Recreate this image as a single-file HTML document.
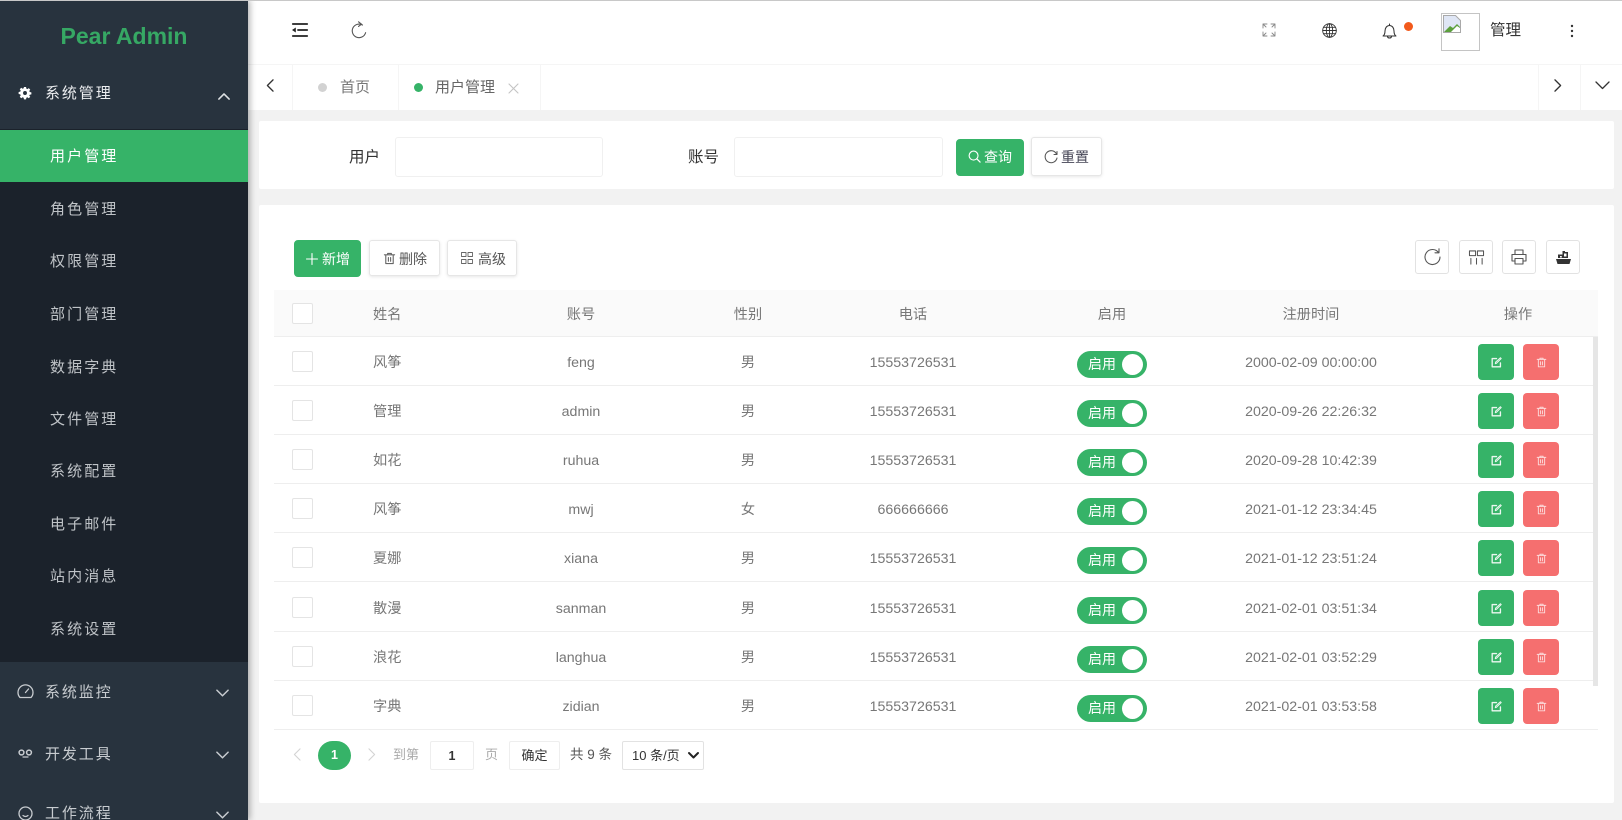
<!DOCTYPE html>
<html lang="zh"><head><meta charset="utf-8"><title>Pear Admin</title>
<style>
*{box-sizing:border-box}
html,body{margin:0;padding:0;width:1622px;height:820px;overflow:hidden;background:#f2f2f2;font-family:"Liberation Sans","Noto Sans CJK SC",sans-serif;color:#666}
#root{position:absolute;left:0;top:0;width:1622px;height:820px;overflow:hidden;filter:blur(.35px)}
.a{position:absolute}
.t{position:absolute;white-space:nowrap;line-height:20px;height:20px}
.c{transform:translateX(-50%)}
#side{left:0;top:0;width:248px;height:820px;background:#28333e;box-shadow:2px 0 6px rgba(0,0,0,.3);overflow:hidden;z-index:5}
.m{left:45px;color:#d8dbde;font-size:15px;letter-spacing:1.9px}
.s{left:50px;color:#bfc3c7;font-size:15px;letter-spacing:2.1px}
#sub{left:0;top:129px;width:248px;height:533px;background:#1b222b}
#act{left:0;top:130px;width:248px;height:52px;background:#36b368}
svg{position:absolute;overflow:visible}
.ln{fill:none;stroke:currentColor;stroke-linecap:round;stroke-linejoin:round}
.card{background:#fff;border-radius:2px}
.btn{position:absolute;background:#fff;border:1px solid #e6e6e6;border-radius:3px;box-shadow:0 1px 3px rgba(0,0,0,.1);font-size:14px;color:#555;line-height:34px;text-align:center;white-space:nowrap}
.g{background:#36b368;border-color:#36b368;color:#fff;box-shadow:none}
.inp{position:absolute;background:#fff;border:1px solid #f0f0f0;border-radius:3px}
.row{position:absolute;left:274px;width:1324px;height:49px;border-bottom:1px solid #eeeeee;font-size:14.2px;color:#777}
.row .t{top:16px}
.head .t{top:15px}
.cb{position:absolute;left:18px;top:14px;width:21px;height:21px;background:#fff;border:1px solid #e4e4e4;border-radius:2px}
.sw{position:absolute;left:803px;top:14px;width:70px;height:27px;border-radius:14px;background:#36b368;color:#fff;font-size:14px;line-height:27px;padding-left:11px}
.sw i{position:absolute;right:4px;top:3px;width:21px;height:21px;border-radius:50%;background:#fff}
.ed,.de{position:absolute;top:7px;width:36px;height:36px;border-radius:4px}
.ed{left:1204px;background:#36b368}.de{left:1249px;background:#f56f6f}
.ed svg,.de svg{left:12.5px;top:12.5px;color:#fff;opacity:.9}
.de svg{opacity:.75}
.sq{position:absolute;top:240px;width:34px;height:34px;background:#fff;border:1px solid #e2e2e2;border-radius:3px;color:#555}
.pg{position:absolute;background:#fff;border:1px solid #eeeeee;top:741px;height:29px;text-align:center;line-height:28px;font-size:13px;color:#333}
</style></head><body>
<svg width="0" height="0" style="position:absolute"><defs>
<symbol id="trash" viewBox="0 0 14 14"><path class="ln" d="M1.500 3h11M5 3V1.500h4V3M3 3v9.500h8V3M5.800 6v4M8.200 6v4" stroke-width="1.200"/></symbol>
<symbol id="edit" viewBox="0 0 14 14"><path class="ln" d="M12 7.500V12.500H1.500V2H7" stroke-width="1.700"/><path class="ln" d="M5.500 8.500l.4-2L12 1l1 1-6 6z" stroke-width="1.300"/></symbol>
<symbol id="down" viewBox="0 0 14 8"><path class="ln" d="M1 1l6 6 6-6" stroke-width="1.600"/></symbol>
</defs></svg>
<div id="root">
<div class="a" style="left:0;top:0;width:1622px;height:1px;background:#c8c8c8;z-index:6"></div>

<!-- sidebar -->
<div class="a" id="side">
<div class="t c" style="left:124px;top:24px;height:24px;line-height:24px;font-size:23px;font-weight:bold;color:#36a864">Pear Admin</div>
<svg style="left:19px;top:87px;color:#fff" width="12" height="12" viewBox="0 0 16 16"><path fill="currentColor" d="M6.600 0h2.800l.4 2.200 1.400.6L13 1.500l2 2-1.300 1.800.6 1.400 2.200.4v2.800l-2.200.4-.6 1.400L15 13l-2 2-1.800-1.300-1.400.6-.4 2.200H6.600l-.4-2.200-1.400-.6L3 15l-2-2 1.300-1.800-.6-1.400L-.5 9.400V6.600l2.200-.4.6-1.400L1 3l2-2 1.800 1.300 1.400-.6z"/><circle cx="8" cy="8" r="2.600" fill="#28333e"/></svg>
<div class="t m" style="top:84px;color:#eceef0">系统管理</div>
<svg style="left:218px;top:93px;color:#dfe2e4" width="12" height="7" viewBox="0 0 14 8"><path class="ln" d="M1 7l6-6 6 6" stroke-width="1.800"/></svg>
<div class="a" id="sub"></div>
<div class="a" id="act"></div>
<div class="t s" style="top:147px;color:#fff">用户管理</div>
<div class="t s" style="top:200px">角色管理</div>
<div class="t s" style="top:252px">权限管理</div>
<div class="t s" style="top:305px">部门管理</div>
<div class="t s" style="top:358px">数据字典</div>
<div class="t s" style="top:410px">文件管理</div>
<div class="t s" style="top:462px">系统配置</div>
<div class="t s" style="top:515px">电子邮件</div>
<div class="t s" style="top:567px">站内消息</div>
<div class="t s" style="top:620px">系统设置</div>
<svg style="left:17px;top:684px;color:#c8ccd0" width="17" height="15" viewBox="0 0 17 15"><path class="ln" d="M3 13.500h11a7.500 7.500 0 1 0-11 0zM8.500 8.500l3-3.500" stroke-width="1.300"/></svg>
<div class="t m" style="top:683px;color:#c8ccd0">系统监控</div>
<svg style="left:216px;top:689px;color:#c8ccd0" width="13" height="8"><use href="#down"/></svg>
<svg style="left:18px;top:749px;color:#c8ccd0" width="15" height="9" viewBox="0 0 15 9"><circle class="ln" cx="3.500" cy="3.500" r="2.400" stroke-width="1.500"/><circle class="ln" cx="11" cy="3.500" r="2.400" stroke-width="1.500"/><path class="ln" d="M5 8h5" stroke-width="1.200"/></svg>
<div class="t m" style="top:745px;color:#c8ccd0">开发工具</div>
<svg style="left:216px;top:751px;color:#c8ccd0" width="13" height="8"><use href="#down"/></svg>
<svg style="left:18px;top:806px;color:#c8ccd0" width="15" height="15" viewBox="0 0 15 15"><circle class="ln" cx="7.500" cy="7.500" r="6.500" stroke-width="1.300"/><path class="ln" d="M5 9.500c1.500 1.200 3.500 1.200 5 0" stroke-width="1.200"/></svg>
<div class="t m" style="top:804px;color:#c8ccd0">工作流程</div>
<svg style="left:216px;top:811px;color:#c8ccd0" width="13" height="8"><use href="#down"/></svg>
</div>

<!-- header -->
<div class="a" style="left:248px;top:0;width:1374px;height:64px;background:#fff"></div>
<svg style="left:292px;top:23px;color:#222" width="16" height="14" viewBox="0 0 16 14"><path class="ln" d="M.8 1h14.400M6 7h9.200M.8 13h14.400" stroke-width="1.800"/><path fill="#222" d="M0 7l3.800-2.500v5z"/></svg>
<svg style="left:351px;top:21px;color:#555" width="16" height="18" viewBox="0 0 16 18"><path class="ln" d="M9.500 3.200A6.800 6.800 0 1 0 14.800 9.500" stroke-width="1.100" transform="rotate(18 8 10)"/><path class="ln" d="M7.500 .8l3 2.400-3 2.200" stroke-width="1.100"/></svg>
<svg style="left:1262px;top:23px;color:#888" width="14" height="14" viewBox="0 0 14 14"><path class="ln" d="M1 5V1h4M1 1l3 3M13 5V1H9M13 1l-3 3M1 9v4h4M1 13l3-3M13 9v4H9M13 13l-3-3" stroke-width=".9"/></svg>
<svg style="left:1322px;top:23px;color:#333" width="15" height="15" viewBox="0 0 15 15"><g class="ln" stroke-width=".9"><circle cx="7.500" cy="7.500" r="6.800"/><ellipse cx="7.500" cy="7.500" rx="3.200" ry="6.800"/><path d="M7.500 .7v13.600M.7 7.500h13.600M1.600 4.300h11.800M1.600 10.700h11.800"/></g></svg>
<svg style="left:1382px;top:23px;color:#333" width="15" height="17" viewBox="0 0 15 17"><path class="ln" d="M1 13h13c-1.500-1-2-2.500-2-5 0-3-1.800-5.500-4.500-5.500S3 5 3 8c0 2.500-.5 4-2 5zM7.500 1v1.500M5.500 13.500c.3 2 3.700 2 4 0" stroke-width="1.050"/></svg>
<div class="a" style="left:1404px;top:22px;width:9px;height:9px;border-radius:50%;background:#f25a1c"></div>
<div class="a" style="left:1441px;top:13px;width:39px;height:38px;border:1px solid #c4c4c4;background:#fff"></div>
<svg style="left:1443px;top:15px" width="18" height="18" viewBox="0 0 18 18"><path d="M.5.5h12l5 5v12H.5z" fill="#dfe6f5" stroke="#a9a9a9"/><path d="M1 17l6-6 3 2 4-4 3 3v5z" fill="#5ca03d"/><path d="M8 17l6-6 3 2v4z" fill="#fff"/></svg>
<div class="t" style="left:1490px;top:21px;font-size:15.500px;color:#333">管理</div>
<svg style="left:1570px;top:24px" width="4" height="14" viewBox="0 0 4 14"><circle cx="2" cy="2" r="1.200" fill="#333"/><circle cx="2" cy="7" r="1.200" fill="#333"/><circle cx="2" cy="12" r="1.200" fill="#333"/></svg>

<!-- tabs -->
<div class="a" style="left:248px;top:64px;width:1374px;height:46px;background:#fff;border-top:1px solid #f5f5f5"></div>
<div class="a" style="left:292px;top:65px;width:1px;height:45px;background:#f5f5f5"></div>
<div class="a" style="left:398px;top:65px;width:1px;height:45px;background:#f5f5f5"></div>
<div class="a" style="left:540px;top:65px;width:1px;height:45px;background:#f5f5f5"></div>
<div class="a" style="left:1538px;top:65px;width:1px;height:45px;background:#f5f5f5"></div>
<div class="a" style="left:1580px;top:65px;width:1px;height:45px;background:#f5f5f5"></div>
<svg style="left:266px;top:79px;color:#333" width="8" height="13" viewBox="0 0 9 15"><path class="ln" d="M8 1L1.500 7.500 8 14" stroke-width="1.500"/></svg>
<div class="a" style="left:318px;top:83px;width:9px;height:9px;border-radius:50%;background:#d2d2d2"></div>
<div class="t" style="left:340px;top:78px;font-size:15px;color:#777">首页</div>
<div class="a" style="left:414px;top:83px;width:9px;height:9px;border-radius:50%;background:#36b368"></div>
<div class="t" style="left:435px;top:78px;font-size:15px;color:#666">用户管理</div>
<svg style="left:508px;top:83px;color:#c4c4c4" width="11" height="11" viewBox="0 0 11 11"><path class="ln" d="M1 1l9 9M10 1l-9 9" stroke-width="1.100"/></svg>
<svg style="left:1554px;top:79px;color:#333" width="8" height="13" viewBox="0 0 9 15"><path class="ln" d="M1 1l6.500 6.500L1 14" stroke-width="1.500"/></svg>
<svg style="left:1595px;top:81px;color:#333" width="15" height="9" viewBox="0 0 15 9"><path class="ln" d="M1 1l6.500 6.500L14 1" stroke-width="1.300"/></svg>

<!-- search card -->
<div class="a card" style="left:259px;top:121px;width:1355px;height:68px"></div>
<div class="t" style="left:349px;top:148px;font-size:15.500px;color:#333">用户</div>
<div class="inp" style="left:395px;top:137px;width:208px;height:40px"></div>
<div class="t" style="left:688px;top:148px;font-size:15.500px;color:#333">账号</div>
<div class="inp" style="left:734px;top:137px;width:209px;height:40px"></div>
<div class="btn g" style="left:956px;top:139px;width:68px;height:37px;border-radius:4px"></div>
<svg style="left:968px;top:150px;color:#fff" width="13" height="13" viewBox="0 0 14 14"><circle class="ln" cx="6" cy="6" r="4.800" stroke-width="1.200"/><path class="ln" d="M9.500 9.500l3.500 3.500" stroke-width="1.400"/></svg>
<div class="t" style="left:984px;top:147px;font-size:14px;color:#fff">查询</div>
<div class="btn" style="left:1031px;top:137px;width:71px;height:39px"></div>
<svg style="left:1044px;top:150px;color:#555" width="14" height="14" viewBox="0 0 14 14"><path class="ln" d="M12.500 4A6 6 0 1 0 13 8M13 1.500V4.500H10" stroke-width="1.050"/></svg>
<div class="t" style="left:1061px;top:147px;font-size:14px;color:#445">重置</div>

<!-- table card -->
<div class="a card" style="left:259px;top:205px;width:1355px;height:598px"></div>
<div class="btn g" style="left:294px;top:240px;width:67px;height:37px;border-radius:4px"></div>
<svg style="left:306px;top:253px;color:#fff" width="12" height="12" viewBox="0 0 12 12"><path class="ln" d="M6 .5v11M.5 6h11" stroke-width="1.100"/></svg>
<div class="t" style="left:322px;top:249px;font-size:14px;color:#fff">新增</div>
<div class="btn" style="left:369px;top:240px;width:71px;height:36px"></div>
<svg style="left:383px;top:252px;color:#666" width="13" height="13"><use href="#trash"/></svg>
<div class="t" style="left:399px;top:249px;font-size:14px;color:#555">删除</div>
<div class="btn" style="left:447px;top:240px;width:70px;height:36px"></div>
<svg style="left:461px;top:252px;color:#666" width="12" height="12" viewBox="0 0 12 12"><g class="ln" stroke-width=".9"><rect x=".5" y=".5" width="4.500" height="4"/><rect x="7" y=".5" width="4.500" height="4"/><rect x=".5" y="7.500" width="4.500" height="4"/><rect x="7" y="7.500" width="4.500" height="4"/></g></svg>
<div class="t" style="left:478px;top:249px;font-size:14px;color:#555">高级</div>

<div class="sq" style="left:1415px"><svg style="left:8px;top:7px" width="17" height="17" viewBox="0 0 17 17"><path class="ln" d="M14.500 4.500A7.500 7.500 0 1 0 16 9M15 .8V4.800H11" stroke-width="1.100"/></svg></div>
<div class="sq" style="left:1459px"><svg style="left:9px;top:9px" width="15" height="15" viewBox="0 0 16 15"><g class="ln" stroke-width="1.100"><rect x=".5" y=".5" width="6.500" height="5"/><rect x="9" y=".5" width="6.500" height="5"/><path d="M2 8.500v6M8 8.500v6M14 8.500v6"/></g></svg></div>
<div class="sq" style="left:1502px"><svg style="left:8px;top:8px" width="16" height="16" viewBox="0 0 16 16"><g class="ln" stroke-width="1.100"><path d="M4 5V1h8v4M4 12H1V5.500h14V12h-3"/><rect x="4" y="9.500" width="8" height="5.500"/></g></svg></div>
<div class="sq" style="left:1546px"><svg style="left:9px;top:8px" width="15" height="16" viewBox="0 0 15 16"><path fill="#333" d="M0 10h15l-1.500 5H1.500zM2 9V5.500h4.500V2H9v1h3v6z"/><path fill="#fff" d="M4 7h1.800v1.500H4zM8 4.500h2.500V7.500H8z"/></svg></div>

<!-- table head -->
<div class="a head" style="left:274px;top:290px;width:1324px;height:47px;background:#fafafa;border-bottom:1px solid #eeeeee;font-size:14.200px;color:#777">
<div class="cb" style="top:13px"></div>
<div class="t" style="left:99px">姓名</div>
<div class="t c" style="left:307px">账号</div>
<div class="t c" style="left:474px">性别</div>
<div class="t c" style="left:639px">电话</div>
<div class="t c" style="left:838px">启用</div>
<div class="t c" style="left:1037px">注册时间</div>
<div class="t c" style="left:1244px">操作</div>
</div>
<div class="a" style="left:1593px;top:337px;width:5px;height:349px;background:#e6e6e6;z-index:2"></div>

<!-- rows -->
<div class="row" style="top:337px"><div class="cb"></div><div class="t" style="left:99px">风筝</div><div class="t c" style="left:307px">feng</div><div class="t c" style="left:474px">男</div><div class="t c" style="left:639px">15553726531</div><div class="sw">启用<i></i></div><div class="t c" style="left:1037px">2000-02-09 00:00:00</div><div class="ed"><svg width="11" height="11"><use href="#edit"/></svg></div><div class="de"><svg width="11" height="11"><use href="#trash"/></svg></div></div>
<div class="row" style="top:386px"><div class="cb"></div><div class="t" style="left:99px">管理</div><div class="t c" style="left:307px">admin</div><div class="t c" style="left:474px">男</div><div class="t c" style="left:639px">15553726531</div><div class="sw">启用<i></i></div><div class="t c" style="left:1037px">2020-09-26 22:26:32</div><div class="ed"><svg width="11" height="11"><use href="#edit"/></svg></div><div class="de"><svg width="11" height="11"><use href="#trash"/></svg></div></div>
<div class="row" style="top:435px"><div class="cb"></div><div class="t" style="left:99px">如花</div><div class="t c" style="left:307px">ruhua</div><div class="t c" style="left:474px">男</div><div class="t c" style="left:639px">15553726531</div><div class="sw">启用<i></i></div><div class="t c" style="left:1037px">2020-09-28 10:42:39</div><div class="ed"><svg width="11" height="11"><use href="#edit"/></svg></div><div class="de"><svg width="11" height="11"><use href="#trash"/></svg></div></div>
<div class="row" style="top:484px"><div class="cb"></div><div class="t" style="left:99px">风筝</div><div class="t c" style="left:307px">mwj</div><div class="t c" style="left:474px">女</div><div class="t c" style="left:639px">666666666</div><div class="sw">启用<i></i></div><div class="t c" style="left:1037px">2021-01-12 23:34:45</div><div class="ed"><svg width="11" height="11"><use href="#edit"/></svg></div><div class="de"><svg width="11" height="11"><use href="#trash"/></svg></div></div>
<div class="row" style="top:533px"><div class="cb"></div><div class="t" style="left:99px">夏娜</div><div class="t c" style="left:307px">xiana</div><div class="t c" style="left:474px">男</div><div class="t c" style="left:639px">15553726531</div><div class="sw">启用<i></i></div><div class="t c" style="left:1037px">2021-01-12 23:51:24</div><div class="ed"><svg width="11" height="11"><use href="#edit"/></svg></div><div class="de"><svg width="11" height="11"><use href="#trash"/></svg></div></div>
<div class="row" style="top:583px"><div class="cb"></div><div class="t" style="left:99px">散漫</div><div class="t c" style="left:307px">sanman</div><div class="t c" style="left:474px">男</div><div class="t c" style="left:639px">15553726531</div><div class="sw">启用<i></i></div><div class="t c" style="left:1037px">2021-02-01 03:51:34</div><div class="ed"><svg width="11" height="11"><use href="#edit"/></svg></div><div class="de"><svg width="11" height="11"><use href="#trash"/></svg></div></div>
<div class="row" style="top:632px"><div class="cb"></div><div class="t" style="left:99px">浪花</div><div class="t c" style="left:307px">langhua</div><div class="t c" style="left:474px">男</div><div class="t c" style="left:639px">15553726531</div><div class="sw">启用<i></i></div><div class="t c" style="left:1037px">2021-02-01 03:52:29</div><div class="ed"><svg width="11" height="11"><use href="#edit"/></svg></div><div class="de"><svg width="11" height="11"><use href="#trash"/></svg></div></div>
<div class="row" style="top:681px"><div class="cb"></div><div class="t" style="left:99px">字典</div><div class="t c" style="left:307px">zidian</div><div class="t c" style="left:474px">男</div><div class="t c" style="left:639px">15553726531</div><div class="sw">启用<i></i></div><div class="t c" style="left:1037px">2021-02-01 03:53:58</div><div class="ed"><svg width="11" height="11"><use href="#edit"/></svg></div><div class="de"><svg width="11" height="11"><use href="#trash"/></svg></div></div>

<!-- pagination -->
<svg style="left:293px;top:748px;color:#d4d4d4" width="8" height="13" viewBox="0 0 9 15"><path class="ln" d="M8 1L1.500 7.500 8 14" stroke-width="1.300"/></svg>
<div class="a" style="left:318px;top:741px;width:33px;height:29px;border-radius:15px;background:#36b368;color:#fff;text-align:center;line-height:29px;font-size:12.500px;font-weight:bold">1</div>
<svg style="left:368px;top:748px;color:#d4d4d4" width="8" height="13" viewBox="0 0 9 15"><path class="ln" d="M1 1l6.500 6.500L1 14" stroke-width="1.300"/></svg>
<div class="t" style="left:393px;top:745px;font-size:13px;color:#aaa">到第</div>
<div class="pg" style="left:430px;width:44px;border-radius:2px;font-weight:bold;font-size:12.500px">1</div>
<div class="t" style="left:485px;top:745px;font-size:13px;color:#aaa">页</div>
<div class="pg" style="left:509px;width:51px;border-radius:2px">确定</div>
<div class="t" style="left:570px;top:745px;font-size:13.500px;color:#555">共 9 条</div>
<div class="pg" style="left:622px;width:82px;border-color:#e2e2e2;border-radius:2px;text-align:left;padding-left:9px">10 条/页</div>
<svg style="left:688px;top:752px;color:#222" width="11" height="7" viewBox="0 0 11 7"><path class="ln" d="M1 1l4.500 4.500L10 1" stroke-width="2"/></svg>
</div>
</body></html>
